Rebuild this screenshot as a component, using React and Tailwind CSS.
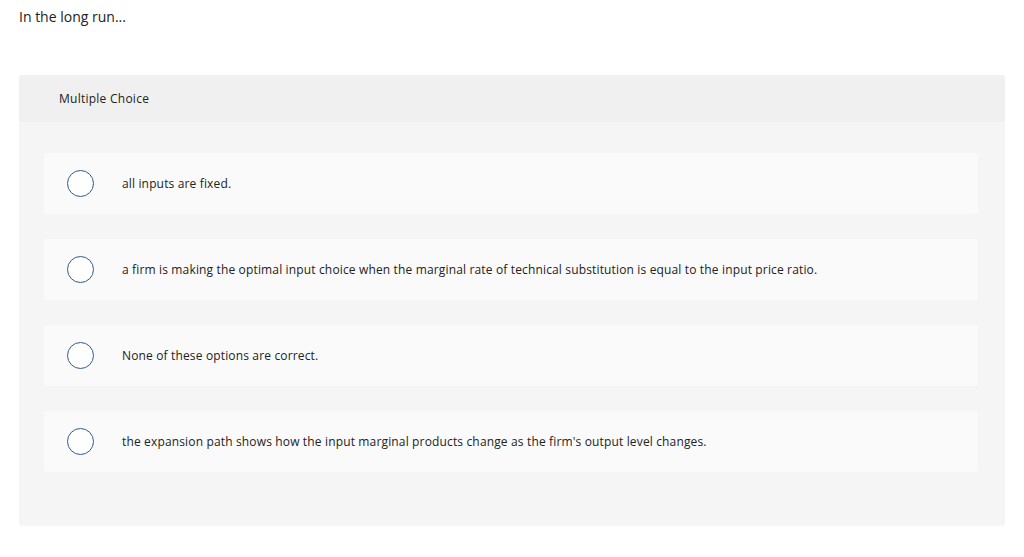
import React from "react";

const options = [
  "all inputs are fixed.",
  "a firm is making the optimal input choice when the marginal rate of technical substitution is equal to the input price ratio.",
  "None of these options are correct.",
  "the expansion path shows how the input marginal products change as the firm's output level changes.",
];

export default function App() {
  return (
    <div className="min-h-[557px] w-full bg-white px-[19px] pt-[8px] text-[#333] [font-family:'Open_Sans','Liberation_Sans',sans-serif]">
      {/* Question */}
      <p className="text-[14px] leading-[18px] text-[#222]">In the long run...</p>

      {/* Answer panel */}
      <div className="mt-[49px] w-[986px] overflow-hidden rounded-[3px] bg-[#f5f5f5]">
        <div className="flex h-[47px] items-center bg-[#f0f0f0] pl-[40px] text-[12px] tracking-[0.25px] text-[#222]">
          Multiple Choice
        </div>
        <div className="flex flex-col gap-[25px] pl-[25px] pr-[27px] pt-[31px] pb-[54px]">
          {options.map((opt) => (
            <label
              key={opt}
              className="flex h-[61px] cursor-pointer items-center rounded-[3px] bg-[#fafafa] pl-[23px]"
            >
              <span className="h-[27px] w-[27px] shrink-0 rounded-full border-[1.5px] border-[#2d5b92] bg-white" />
              <span className="ml-[28px] pt-px text-[12px] tracking-[0.15px] text-[#222]">{opt}</span>
            </label>
          ))}
        </div>
      </div>
    </div>
  );
}
